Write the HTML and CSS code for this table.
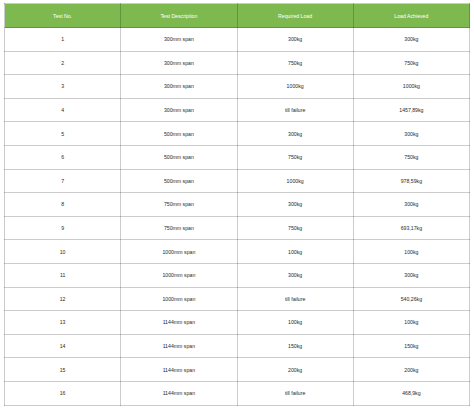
FILE: index.html
```html
<!DOCTYPE html>
<html>
<head>
<meta charset="utf-8">
<link rel="stylesheet" href="styles.css">
</head>
<body>
<table class="results">
  <thead>
    <tr><th>Test No.</th><th>Test Description</th><th>Required Load</th><th>Load Achieved</th></tr>
  </thead>
  <tbody>
    <tr><td>1</td><td>300mm span</td><td>300kg</td><td>300kg</td></tr>
    <tr><td>2</td><td>300mm span</td><td>750kg</td><td>750kg</td></tr>
    <tr><td>3</td><td>300mm span</td><td>1000kg</td><td>1000kg</td></tr>
    <tr><td>4</td><td>300mm span</td><td>till failure</td><td>1457,89kg</td></tr>
    <tr><td>5</td><td>500mm span</td><td>300kg</td><td>300kg</td></tr>
    <tr><td>6</td><td>500mm span</td><td>750kg</td><td>750kg</td></tr>
    <tr><td>7</td><td>500mm span</td><td>1000kg</td><td>978,59kg</td></tr>
    <tr><td>8</td><td>750mm span</td><td>300kg</td><td>300kg</td></tr>
    <tr><td>9</td><td>750mm span</td><td>750kg</td><td>693,17kg</td></tr>
    <tr><td>10</td><td>1000mm span</td><td>100kg</td><td>100kg</td></tr>
    <tr><td>11</td><td>1000mm span</td><td>300kg</td><td>300kg</td></tr>
    <tr><td>12</td><td>1000mm span</td><td>till failure</td><td>540,26kg</td></tr>
    <tr><td>13</td><td>1144mm span</td><td>100kg</td><td>100kg</td></tr>
    <tr><td>14</td><td>1144mm span</td><td>150kg</td><td>150kg</td></tr>
    <tr><td>15</td><td>1144mm span</td><td>200kg</td><td>200kg</td></tr>
    <tr><td>16</td><td>1144mm span</td><td>till failure</td><td>468,9kg</td></tr>
  </tbody>
</table>
</body>
</html>
```
FILE: styles.css
```css
html, body {
  margin: 0;
  padding: 0;
  background: #ffffff;
}
body {
  padding: 3px 0 0 4px;
  font-family: "Liberation Sans", Arial, sans-serif;
}
.results {
  width: 466px;
  table-layout: fixed;
  border-collapse: collapse;
  font-size: 5.2px;
  color: #2a2a2a;
}
.results th,
.results td {
  border: 1px solid rgba(0, 0, 0, 0.2);
  text-align: center;
  vertical-align: middle;
  padding: 0;
  font-weight: normal;
}
.results th {
  background: #7db94f;
  color: #ffffff;
  height: 23px;
}
.results td {
  height: 22.6px;
}
```
